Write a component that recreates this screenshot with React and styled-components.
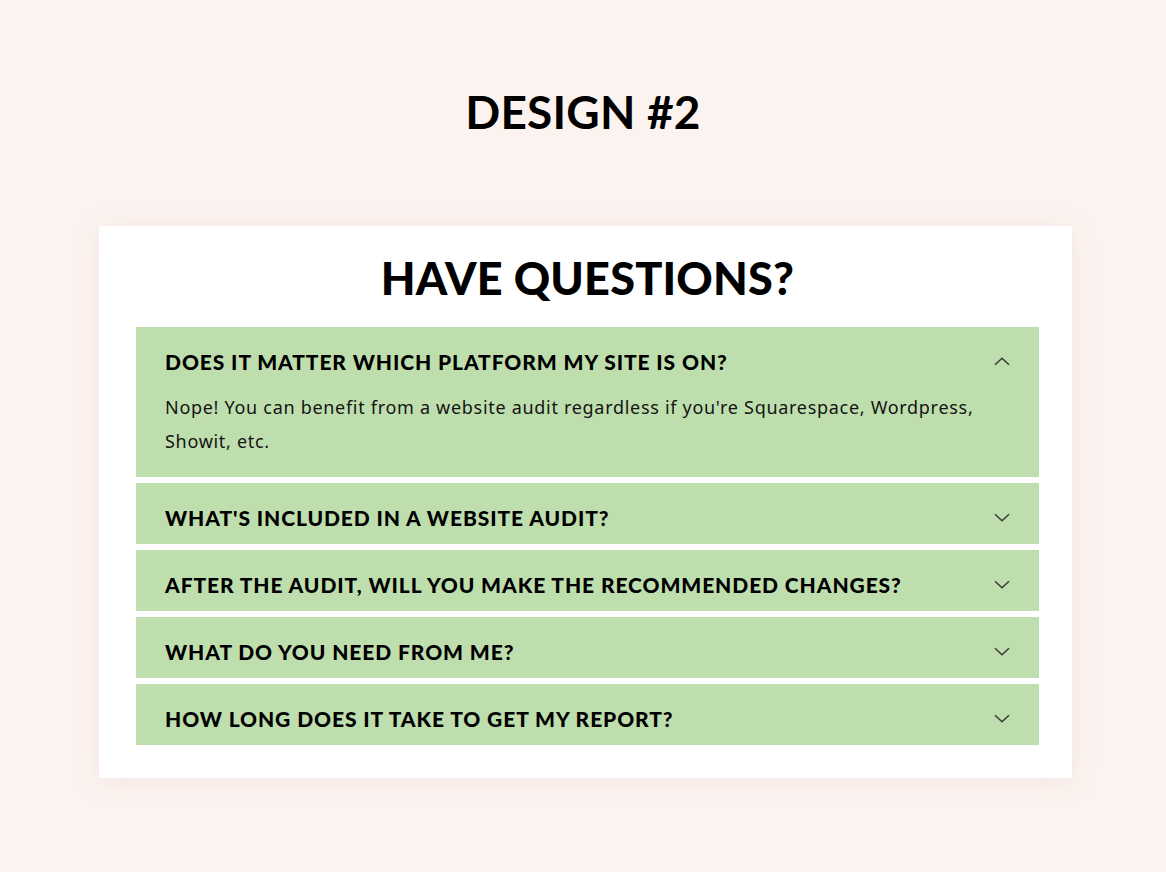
import React, { useState } from 'react'
import styled, { createGlobalStyle } from 'styled-components'

const GlobalStyle = createGlobalStyle`
  html, body {
    margin: 0;
    padding: 0;
    background: #fcf3f0;
  }
`

const faqs = [
  {
    q: 'Does it matter which platform my site is on?',
    a: "Nope! You can benefit from a website audit regardless if you're Squarespace, Wordpress, Showit, etc.",
  },
  { q: "What's included in a website audit?", a: '' },
  { q: 'After the audit, will you make the recommended changes?', a: '' },
  { q: 'What do you need from me?', a: '' },
  { q: 'How long does it take to get my report?', a: '' },
]

const Chevron = ({ open }) => (
  <ChevronSvg viewBox="0 0 16 9" $open={open}>
    <path d="M1 1.2 L8 7.8 L15 1.2" fill="none" stroke="#3a3a3a" strokeWidth="1.5" />
  </ChevronSvg>
)

const App = () => {
  const [openIndex, setOpenIndex] = useState(0)

  return (
    <Page>
      <GlobalStyle />
      <PageTitle>Design #2</PageTitle>
      <FaqCard>
        <FaqHeading>Have Questions?</FaqHeading>
        <FaqList>
          {faqs.map((item, i) => (
            <FaqItem key={i}>
              <FaqToggle onClick={() => setOpenIndex(openIndex === i ? -1 : i)}>
                <Question>{item.q}</Question>
                <Chevron open={openIndex === i} />
              </FaqToggle>
              {openIndex === i && item.a && <Answer>{item.a}</Answer>}
            </FaqItem>
          ))}
        </FaqList>
      </FaqCard>
    </Page>
  )
}
export default App

const Page = styled.div`
  min-height: 872px;
  display: flex;
  flex-direction: column;
  align-items: center;
  padding-top: 87px;
  box-sizing: border-box;
`
const PageTitle = styled.h1`
  margin: 0;
  font-family: Lato, "Liberation Sans", sans-serif;
  font-weight: 700;
  font-size: 46px;
  line-height: 50px;
  letter-spacing: 0.2px;
  text-transform: uppercase;
  color: #000;
`
const FaqCard = styled.section`
  margin: 89px 0 0 5px;
  width: 973px;
  box-sizing: border-box;
  background: #fff;
  padding: 27px 33px 33px 37px;
  box-shadow: 0 4px 24px rgba(200, 170, 160, 0.18);
`
const FaqHeading = styled.h2`
  margin: 0 0 24px;
  text-align: center;
  font-family: Lato, "Liberation Sans", sans-serif;
  font-weight: 900;
  font-size: 45px;
  line-height: 50px;
  letter-spacing: 0.2px;
  text-transform: uppercase;
  color: #000;
`
const FaqList = styled.div`
  display: flex;
  flex-direction: column;
  gap: 6px;
`
const FaqItem = styled.div`
  background: #bfdeae;
`
const FaqToggle = styled.button`
  all: unset;
  box-sizing: border-box;
  width: 100%;
  height: 61px;
  padding: 8px 29px 0;
  display: flex;
  align-items: center;
  justify-content: space-between;
  cursor: pointer;
`
const Question = styled.span`
  font-family: Lato, "Liberation Sans", sans-serif;
  font-weight: 900;
  font-size: 21px;
  letter-spacing: 0.9px;
  text-transform: uppercase;
  color: #000;
`
const ChevronSvg = styled.svg`
  width: 16px;
  height: 9px;
  transform: ${(p) => (p.$open ? 'rotate(180deg)' : 'none')};
`
const Answer = styled.p`
  margin: 0;
  padding: 2px 40px 19px 29px;
  font-family: "Noto Sans", "Liberation Sans", sans-serif;
  font-size: 18px;
  line-height: 34px;
  letter-spacing: 0.7px;
  color: #141414;
`
